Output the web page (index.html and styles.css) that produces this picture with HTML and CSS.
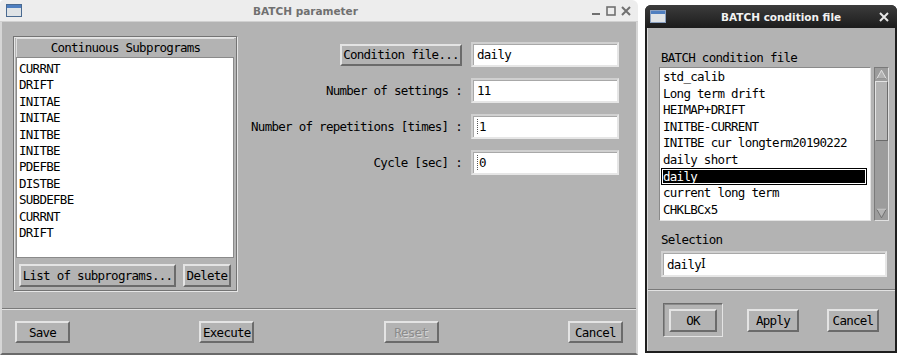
FILE: index.html
```html
<!DOCTYPE html>
<html>
<head>
<meta charset="utf-8">
<link rel="stylesheet" href="styles.css">
</head>
<body>
<div class="desk">
  <div class="win main">
    <div class="tb tb-light">
      <svg class="wicon" width="16" height="13" viewBox="0 0 16 13"><rect x="0.5" y="0.5" width="15" height="12" fill="#dfe3e6" stroke="#4a6a90"/><rect x="1" y="1" width="14" height="3" fill="#4f7fc0"/></svg>
      <span class="ttl ttl-main">BATCH parameter</span>
      <div class="ctls">
        <svg width="12" height="12" viewBox="0 0 12 12"><rect x="2" y="8" width="8" height="2" fill="#707070"/></svg>
        <svg width="12" height="12" viewBox="0 0 12 12"><rect x="2" y="2" width="8" height="8" fill="none" stroke="#707070" stroke-width="1.6"/></svg>
        <svg width="12" height="12" viewBox="0 0 12 12"><path d="M2 2L10 10M10 2L2 10" stroke="#707070" stroke-width="2"/></svg>
      </div>
    </div>
    <div class="wbody">
      <div class="top">
        <div class="lpanel">
          <div class="lphead">Continuous Subprograms</div>
          <div class="lbox">
            <div>CURRNT</div><div>DRIFT</div><div>INITAE</div><div>INITAE</div><div>INITBE</div><div>INITBE</div><div>PDEFBE</div><div>DISTBE</div><div>SUBDEFBE</div><div>CURRNT</div><div>DRIFT</div>
          </div>
          <div class="lpbtns">
            <div class="btn btn-list">List of subprograms...</div>
            <div class="btn btn-del">Delete</div>
          </div>
        </div>
        <div class="form">
          <div class="lab"><div class="btn btn-cond">Condition file...</div></div>
          <div class="inp">daily</div>
          <div class="lab">Number of settings :</div>
          <div class="inp">11</div>
          <div class="lab">Number of repetitions [times] :</div>
          <div class="inp"><span class="caret">1</span></div>
          <div class="lab">Cycle [sec] :</div>
          <div class="inp"><span class="caret">0</span></div>
        </div>
      </div>
      <div class="sep"></div>
      <div class="actions">
        <div class="btn abtn">Save</div>
        <div class="btn abtn">Execute</div>
        <div class="btn abtn dis">Reset</div>
        <div class="btn abtn">Cancel</div>
      </div>
    </div>
  </div>

  <div class="win dlg">
    <div class="tb tb-dark">
      <svg class="wicon" width="16" height="13" viewBox="0 0 16 13"><rect x="0.5" y="0.5" width="15" height="12" fill="#dfe3e6" stroke="#8aa0c0"/><rect x="1" y="1" width="14" height="3" fill="#4f7fc0"/></svg>
      <span class="ttl ttl-dlg">BATCH condition file</span>
      <svg class="dclose" width="12" height="12" viewBox="0 0 12 12"><path d="M2 2L10 10M10 2L2 10" stroke="#e8e8e8" stroke-width="2"/></svg>
    </div>
    <div class="dbody">
      <div class="dlab">BATCH condition file</div>
      <div class="drow">
        <div class="dlist">
          <div>std_calib</div><div>Long term drift</div><div>HEIMAP+DRIFT</div><div>INITBE-CURRENT</div><div>INITBE cur longterm20190222</div><div>daily short</div><div class="sel">daily</div><div>current long term</div><div>CHKLBCx5</div>
        </div>
        <div class="sbar">
          <svg class="arr" width="15" height="14" viewBox="0 0 15 14"><path d="M7.5 2L13 12H2Z" fill="#b3b3b3" stroke="#e8e8e8"/><path d="M13 12H2" stroke="#6a6a6a"/></svg>
          <div class="thumb"></div>
          <div class="trough"></div>
          <svg class="arr" width="15" height="14" viewBox="0 0 15 14"><path d="M7.5 12L13 2H2Z" fill="#b3b3b3" stroke="#6a6a6a"/><path d="M2 2H13" stroke="#e8e8e8"/></svg>
        </div>
      </div>
      <div class="dlab dlab2">Selection</div>
      <div class="dinp">daily<span class="ibeam">I</span></div>
      <div class="dsep"></div>
      <div class="dactions">
        <div class="defring"><div class="btn dbtn">OK</div></div>
        <div class="btn dbtn">Apply</div>
        <div class="btn dbtn">Cancel</div>
      </div>
    </div>
  </div>
</div>
</body>
</html>
```
FILE: styles.css
```css
* { box-sizing: border-box; }
body {
  margin: 0;
  background: #ffffff;
  font-family: "DejaVu Sans Mono", "Liberation Mono", monospace;
  font-size: 12.5px;
  letter-spacing: -0.72px;
  color: #000;
}
.desk {
  display: flex;
  align-items: flex-start;
  width: 900px;
  height: 359px;
}
.win { display: flex; flex-direction: column; }

/* main window */
.main {
  width: 638px;
  height: 355px;
}
.tb {
  display: flex;
  align-items: center;
  position: relative;
  flex: none;
  letter-spacing: 0;
}
.tb-light {
  height: 22px;
  background: #ededed;
  border-top-left-radius: 4px;
  border-top-right-radius: 6px;
  border-bottom: 1px solid #d0d0d0;
  padding-left: 6px;
}
.wicon { flex: none; }
.ttl {
  font-family: "DejaVu Sans", sans-serif;
  font-weight: bold;
  font-size: 10.5px;
}
.ttl-main {
  color: #707070;
  margin-left: 231px;
}
.ctls {
  margin-left: auto;
  margin-right: 6px;
  display: flex;
  gap: 3px;
}
.wbody {
  flex: 1;
  background: #b3b3b3;
  border-left: 2px solid #d6d6d6;
  border-right: 2px solid #d6d6d6;
  border-bottom: 2px solid #6a6a6a;
  display: flex;
  flex-direction: column;
}
.top {
  display: flex;
  padding: 14px 0 0 11px;
  height: 286px;
}
.lpanel {
  width: 224px;
  height: 255px;
  border: 1px solid #747474;
  box-shadow: 1px 1px 0 #e6e6e6, inset 1px 1px 0 #e6e6e6;
  padding: 1px 2px 0 2px;
  display: flex;
  flex-direction: column;
}
.lphead {
  height: 19px;
  line-height: 18px;
  text-align: center;
  border-top: 1px solid #dedede;
  border-left: 1px solid #dedede;
}
.lbox {
  height: 201px;
  background: #fff;
  border: 1px solid #8a8a8a;
  padding: 3px 0 0 2px;
  line-height: 16.4px;
}
.lpbtns {
  display: flex;
  padding: 6px 0 0 2px;
  gap: 7px;
}
.btn {
  border: 2px solid;
  border-color: #e4e4e4 #6b6b6b #6b6b6b #e4e4e4;
  background: #b3b3b3;
  display: flex;
  align-items: center;
  justify-content: center;
  white-space: nowrap;
}
.btn-list { width: 157px; height: 23px; margin-left: 1px; }
.btn-del { width: 48px; height: 23px; }

.form {
  display: grid;
  grid-template-columns: 217px 148px;
  grid-template-rows: repeat(4, 25px);
  column-gap: 9px;
  row-gap: 11px;
  margin: 6px 0 0 8px;
}
.lab {
  display: flex;
  align-items: center;
  justify-content: flex-end;
  white-space: nowrap;
}
.btn-cond { width: 122px; height: 22px; }
.inp {
  background: #fff;
  border: 2px solid;
  border-color: #d0d0d0 #e6e6e6 #e6e6e6 #d0d0d0;
  box-shadow: inset 1px 1px 0 #a8a8a8;
  display: flex;
  align-items: center;
  padding-left: 4px;
}
.caret {
  border-left: 1px dotted #555;
  padding-left: 1px;
}
.sep {
  height: 2px;
  border-top: 1px solid #7a7a7a;
  border-bottom: 1px solid #e2e2e2;
}
.actions {
  display: flex;
  justify-content: space-between;
  padding: 11px 13px 0 13px;
}
.abtn { width: 55px; height: 22px; }
.dis { color: #8c8c8c; text-shadow: 1px 1px 0 #d6d6d6; }

/* dialog */
.dlg {
  width: 252px;
  height: 348px;
  margin: 5px 0 0 7px;
  background: #1e1e1e;
  border-radius: 6px 6px 0 0;
  padding: 0 2px 2px 2px;
}
.tb-dark {
  height: 23px;
  background: linear-gradient(#3c3c3c, #1c1c1c);
  border-radius: 6px 6px 0 0;
  padding-left: 5px;
  margin: 0 -2px;
}
.ttl-dlg {
  color: #f2f2f2;
  margin-left: 55px;
}
.dclose { margin-left: auto; margin-right: 7px; }
.dbody {
  flex: 1;
  background: #b3b3b3;
  display: flex;
  flex-direction: column;
  padding: 21px 0 0 11px;
  border-left: 1px solid #dadada;
}
.dlab { padding-left: 2px; line-height: 17px; }
.drow {
  display: flex;
  height: 154px;
  margin-top: 1px;
  gap: 3px;
}
.dlist {
  width: 212px;
  background: #fff;
  border: 1px solid #8a8a8a;
  border-color: #8a8a8a #e4e4e4 #e4e4e4 #8a8a8a;
  padding: 1px 0 0 1px;
  line-height: 16.5px;
}
.dlist > div { padding-left: 2px; width: 206px; }
.dlist .sel {
  background: #000;
  color: #fff;
  height: 17px;
  line-height: 15px;
  border: 1px solid #000;
  outline: 1px solid #fff;
  outline-offset: -2px;
  padding-left: 1px;
}
.sbar {
  width: 15px;
  background: #9c9c9c;
  display: flex;
  flex-direction: column;
  border: 1px solid;
  border-color: #7a7a7a #e0e0e0 #e0e0e0 #7a7a7a;
}
.arr { flex: none; width: 13px; height: 13px; }
.thumb {
  height: 60px;
  background: #b3b3b3;
  border: 1px solid;
  border-color: #e4e4e4 #6b6b6b #6b6b6b #e4e4e4;
}
.trough { flex: 1; }
.dlab2 { margin-top: 10px; }
.dinp {
  width: 226px;
  height: 26px;
  margin: 3px 0 0 2px;
  background: #fff;
  border: 2px solid;
  border-color: #d0d0d0 #e6e6e6 #e6e6e6 #d0d0d0;
  box-shadow: inset 1px 1px 0 #a8a8a8;
  display: flex;
  align-items: center;
  padding-left: 4px;
}
.ibeam { font-family: "DejaVu Serif", serif; font-size: 12px; margin-left: 0; letter-spacing: 0; }
.dsep {
  height: 2px;
  margin: 12px 0 0 -11px;
  border-top: 1px solid #7a7a7a;
  border-bottom: 1px solid #e2e2e2;
}
.dactions {
  display: flex;
  align-items: center;
  padding: 12px 0 0 4px;
}
.defring {
  width: 60px;
  height: 34px;
  border: 1px solid;
  border-color: #6b6b6b #e4e4e4 #e4e4e4 #6b6b6b;
  box-shadow: inset 1px 1px 0 #8a8a8a;
  display: flex;
  align-items: center;
  justify-content: center;
}
.dbtn { width: 50px; height: 23px; }
.defring .dbtn { width: 48px; }
.dactions > .dbtn:nth-child(2) { margin-left: 24px; width: 52px; }
.dactions > .dbtn:nth-child(3) { margin-left: 28px; width: 52px; }
```
